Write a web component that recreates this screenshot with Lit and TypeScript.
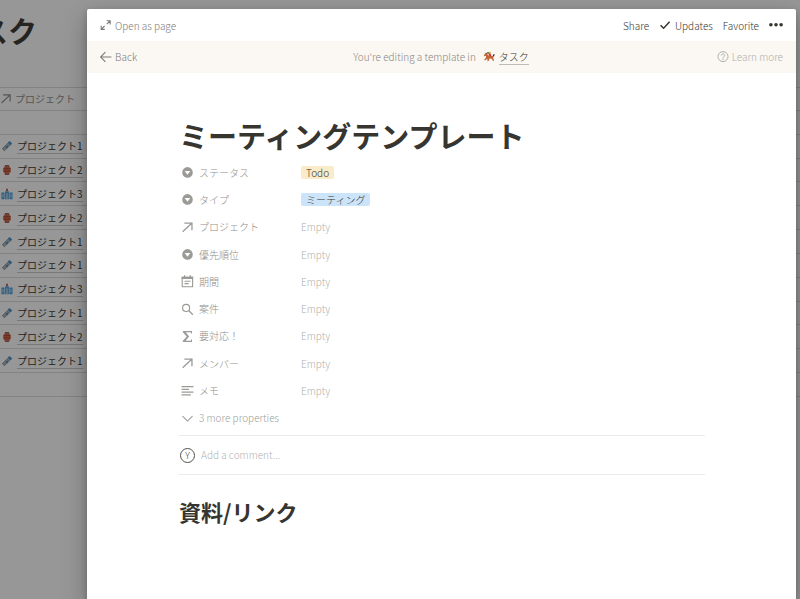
import { LitElement, html, css, svg, TemplateResult } from "lit";
import { customElement } from "lit/decorators.js";

type Property = { icon: string; label: string; value?: string; tone?: string };

const icons: Record<string, TemplateResult> = {
  select: svg`<path fill-rule="evenodd" d="M7 1.2a5.7 5.7 0 1 0 0 11.4A5.7 5.7 0 0 0 7 1.2zM4 5.4h6L7 9.4z"/>`,
  relation: svg`<path fill="none" stroke="currentColor" stroke-width="1.4" d="M3.6 2.2h8.2V10M11.8 2.2 1.8 11.6"/>`,
  date: svg`<path fill="none" stroke="currentColor" stroke-width="1.2" d="M1.3 2.4h11.2v10.3H1.3zM3.8 6.7h6.4M3.8 9.3h4.4"/><path d="M.7 1.8h12.4v2.4H.7zM3.2.4h1.4V3H3.2zM9.3.4h1.4V3H9.3z"/>`,
  search: svg`<circle cx="5.5" cy="5.3" r="3.8" fill="none" stroke="currentColor" stroke-width="1.2"/><path fill="none" stroke="currentColor" stroke-width="1.4" d="m8.3 8.1 4.5 4.5"/>`,
  formula: svg`<path d="M2 1h9.8v2.9h-1.1V2.5H5.1L8.8 7l-3.9 4.5h5.8v-1.4h1.1V13H2v-1.3L6.3 7 2 2.3z"/>`,
  text: svg`<path d="M.6 1h12.8v1.4H.6zM.6 4h8v1.4h-8zM.6 7h12.8v1.4H.6zM.6 10h10v1.4h-10z"/>`,
  chevron: svg`<path fill="none" stroke="currentColor" stroke-width="1.1" d="m1.6 4.4 5.4 5.4 5.4-5.4"/>`,
  expand: svg`<path fill="none" stroke="currentColor" stroke-width="1.1" d="M7.6 1.8h3.6v3.6M11 2 7.8 5.2M2.2 6.8v3.6h3.6M2.4 10.2l3.2-3.2"/>`,
  back: svg`<path fill="none" stroke="currentColor" stroke-width="1.1" d="M6.4 2.2 1.6 7l4.8 4.8M1.6 7h10.8"/>`,
  check: svg`<path fill="none" stroke="currentColor" stroke-width="1.5" d="m1.6 6.2 3 3 6-6.4"/>`,
  help: svg`<g fill="none" stroke="currentColor"><circle cx="7" cy="6.6" r="5"/><path d="M5.3 5.5c0-2.1 3.4-2.1 3.4 0 0 1.2-1.7 1.2-1.7 2.3"/></g><circle cx="7" cy="9.3" r=".7"/>`,
  dots: svg`<circle cx="1.9" cy="5.8" r="1.8"/><circle cx="7" cy="5.8" r="1.8"/><circle cx="12.1" cy="5.8" r="1.8"/>`,
  horse: svg`<path fill="#c0683a" d="M.8 5 3 2.2l1.4.3 2 3h4.4l1.4 1-.2 2 1 2.6-1.2.6-1.8-2.6-2.6-.4-.6 2.8-1.4.8-.4-3.2L2.2 11l-.8-1 2-2.2.2-2.4-1.6.8z"/><path fill="#4a9a4e" d="M4.6 1.2h2.6v2H4.6z"/><path fill="#d93b2b" d="M6.4 2.4 9 3l.6 3.2H6.8z"/><path fill="#f1b83a" d="M7 .8h2.2v1.6H7z"/><path fill="#33302e" d="m11.4 4.4 2.2-1-.6 2.6-1 .8zM3 1.6l1.6 1.2-.6.8z"/>`,
  satellite: svg`<path fill="#a9b2b9" stroke="#59646c" stroke-width=".6" d="M1.5 10.2 8.8 2.8l2.5 2.5L4 12.6z"/><path fill="#3d8fd0" d="m8 3 2-1.8 3 3L11.2 6zM5.3 8.2l1.8-1.8 1.6 1.6L7 9.8z"/>`,
  lantern: svg`<path fill="#d0603f" d="M4 3h6c2 2.5 2 5.5 0 8H4c-2-2.5-2-5.5 0-8z"/><path fill="#7d2f20" d="M4.5 1.4h5V3h-5zM4.5 11h5v1.4h-5zM2.8 5h8.4v.5H2.8zM2.8 8h8.4v.5H2.8z"/>`,
  city: svg`<path fill="#4b9dd6" d="M.5 5.2h3.6V13H.5zM9.9 5.2h3.6V13H9.9zM4.8 3.8h4.4V13H4.8z"/><path fill="#c93c43" d="M6 1h2v2.6H6z"/><path fill="#d6e8f2" d="M6.4 6h1.2v7H6.4zM1.8 7h1v4h-1zM11.2 7h1v4h-1z"/>`,
};

const icon = (name: string) =>
  html`<svg class="icon" viewBox="0 0 14 14" aria-hidden="true">${icons[name]}</svg>`;

const projects = [1, 2, 3, 2, 1, 1, 3, 1, 2, 1];
const projectIcons = ["", "satellite", "lantern", "city"];

const properties: Property[] = [
  { icon: "select", label: "ステータス", value: "Todo", tone: "yellow" },
  { icon: "select", label: "タイプ", value: "ミーティング", tone: "blue" },
  { icon: "relation", label: "プロジェクト" },
  { icon: "select", label: "優先順位" },
  { icon: "date", label: "期間" },
  { icon: "search", label: "案件" },
  { icon: "formula", label: "要対応！" },
  { icon: "relation", label: "メンバー" },
  { icon: "text", label: "メモ" },
];

const shared = css`
  * { box-sizing: border-box; }
  .icon { width: 14px; height: 14px; flex: none; fill: currentColor; display: block; }
  h1, h2 { margin: 0; font-weight: 700; color: #37352f; }
  button {
    font: inherit; color: inherit; background: none; border: 0; padding: 0;
    display: flex; align-items: center; cursor: pointer; white-space: nowrap;
  }
  a { color: inherit; text-decoration: none; }
`;

@customElement("task-board")
export class TaskBoard extends LitElement {
  static styles = [shared, css`
    :host { display: block; padding-top: 9px; }
    h1 { font-size: 29px; line-height: 42px; margin-left: -50px; white-space: nowrap; }
    table { width: 100%; height: 310px; margin-top: 36px; border-collapse: collapse; }
    th, td { height: 23px; padding: 0; border-top: 1px solid #dcdbd9; border-bottom: 1px solid #dcdbd9; text-align: left; font-weight: 400; }
    th { color: #8e8d89; }
    .cell { display: flex; align-items: center; gap: 3px; line-height: 16px; }
    td .cell { gap: 4px; padding-left: 1px; }
    .cell .icon { width: 12px; height: 12px; }
    td a { line-height: 15px; border-bottom: 1px solid #c9c8c5; color: #37352f; }
  `];

  render() {
    return html`
      <h1>タスク</h1>
      <table>
        <thead><tr><th scope="col"><div class="cell">${icon("relation")}プロジェクト</div></th></tr></thead>
        <tbody>
          <tr><td></td></tr>
          ${projects.map((n) => html`<tr><td><div class="cell">
            ${icon(projectIcons[n])}<a href="#">プロジェクト${n}</a></div></td></tr>`)}
          <tr><td></td></tr>
        </tbody>
      </table>
    `;
  }
}

@customElement("template-dialog")
export class TemplateDialog extends LitElement {
  static styles = [shared, css`
    :host { display: block; background: #fff; color: #37352f; }
    .top, .notice { display: flex; align-items: center; justify-content: space-between; height: 32px; padding: 0 13px 0 12px; }
    .notice { display: grid; grid-template-columns: 1fr auto 1fr; background: #fbf7f2; color: #8a8884; }
    .notice .help { justify-self: end; }
    .top { padding-top: 2px; }
    .muted { color: #7d7b77; }
    .faint { color: #b0afab; }
    .top button, .notice button { gap: 2px; }
    .actions { display: flex; align-items: center; gap: 10px; }
    .where { display: flex; align-items: center; gap: 4px; }
    .where .icon { width: 12px; height: 12px; margin-left: 3px; }
    .where a { color: #37352f; border-bottom: 1px solid #bdbbb7; line-height: 14px; }
    main { padding: 41px 91px 40px 92px; }
    h1 { font-size: 29px; line-height: 43px; }
    .properties { display: grid; grid-auto-rows: 1fr; height: 273px; margin-top: 2px; }
    dl { display: contents; }
    .row { display: flex; align-items: center; padding-left: 2px; }
    dt { display: flex; align-items: center; gap: 5px; width: 120px; color: #8f8e8a; }
    dt .icon, .more .icon { width: 13px; height: 13px; color: #9b9a97; }
    dd { margin: 0; }
    .tag { display: block; padding: 0 5px; line-height: 13px; border-radius: 2px; }
    .yellow { background: #fbecc9; }
    .blue { background: #cce4f9; }
    .more { gap: 5px; padding-left: 2px; color: #a09f9b; }
    .comment { display: flex; align-items: center; gap: 6px; height: 40px; margin-top: 3px; padding-left: 1px; border: solid #ebebea; border-width: 1px 0; }
    .avatar { width: 15px; height: 15px; border: 1px solid #55534e; border-radius: 50%; line-height: 13px; text-align: center; font-size: 9px; }
    input { flex: 1; min-width: 0; font: inherit; color: inherit; border: 0; padding: 0; background: none; outline: 0; }
    input::placeholder { color: #b4b3b0; opacity: 1; }
    h2 { font-size: 22px; line-height: 32px; margin-top: 20px; }
  `];

  render() {
    return html`
      <header class="top">
        <button class="muted">${icon("expand")}Open as page</button>
        <div class="actions">
          <button>Share</button>
          <button>${icon("check")}Updates</button>
          <button>Favorite</button>
          <button aria-label="More">${icon("dots")}</button>
        </div>
      </header>
      <div class="notice">
        <button class="muted">${icon("back")}Back</button>
        <div class="where">You're editing a template in ${icon("horse")}<a href="#">タスク</a></div>
        <button class="faint help">${icon("help")}Learn more</button>
      </div>
      <main>
        <h1>ミーティングテンプレート</h1>
        <div class="properties">
          <dl>
            ${properties.map((p) => html`<div class="row">
              <dt>${icon(p.icon)}${p.label}</dt>
              <dd>${p.value
                ? html`<span class="tag ${p.tone}">${p.value}</span>`
                : html`<span class="faint">Empty</span>`}</dd>
            </div>`)}
          </dl>
          <button class="more">${icon("chevron")}3 more properties</button>
        </div>
        <div class="comment">
          <span class="avatar">Y</span>
          <input type="text" aria-label="Add a comment" placeholder="Add a comment..." />
        </div>
        <h2>資料/リンク</h2>
      </main>
    `;
  }
}

@customElement("app-root")
export class AppRoot extends LitElement {
  static styles = css`
    :host {
      display: block; position: relative; min-height: 100vh; overflow: hidden; background: #fff;
      font-family: "Noto Sans CJK JP", "Noto Sans", sans-serif; font-size: 10px; line-height: 16px; font-weight: 300;
    }
    .shade { position: absolute; inset: 0; background: rgb(15 15 15 / 43%); }
    template-dialog {
      position: absolute; inset: 9px 4px 0 87px; border-radius: 2px 2px 0 0;
      box-shadow: 0 3px 6px rgb(15 15 15 / 20%), 0 9px 24px rgb(15 15 15 / 30%);
      overflow: hidden auto; scrollbar-width: none;
    }
  `;

  render() {
    return html`
      <task-board></task-board>
      <div class="shade"></div>
      <template-dialog role="dialog" aria-label="ミーティングテンプレート"></template-dialog>
    `;
  }
}
